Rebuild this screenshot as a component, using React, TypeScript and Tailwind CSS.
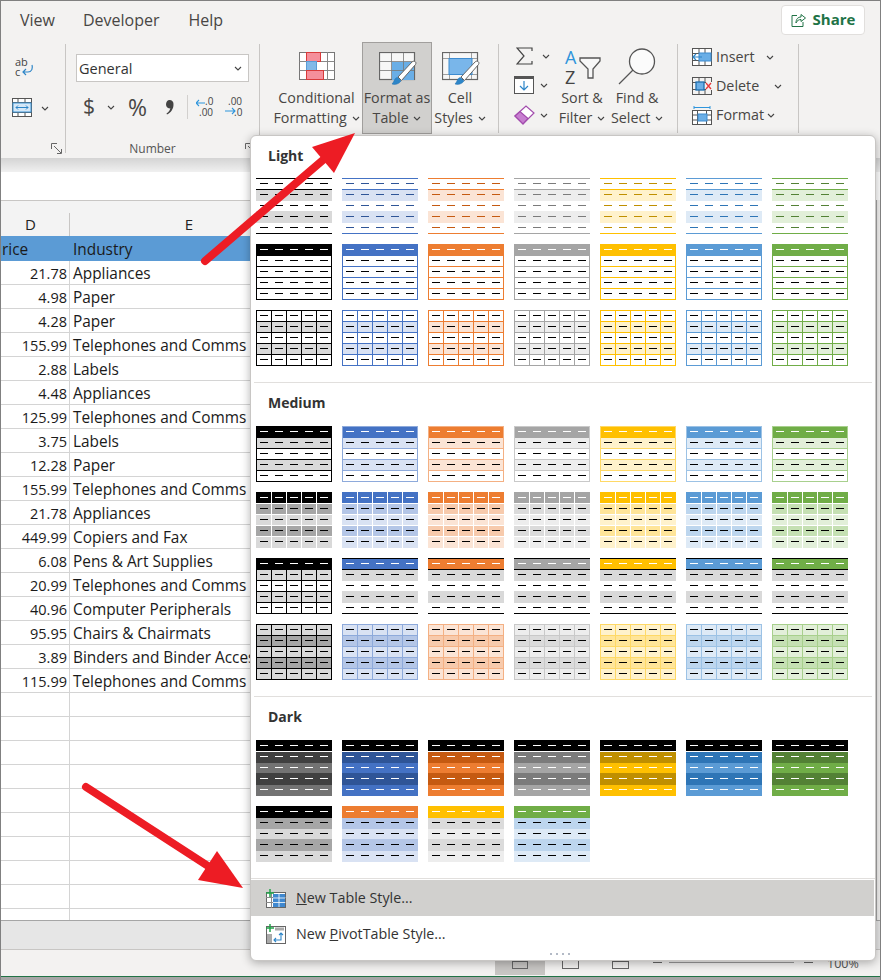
import React from "react";

type Accent = { c: string; light: string; mid: string; border: string; dark: string; alt: string };

const BLACK: Accent = { c: "#000000", light: "#d9d9d9", mid: "#a6a6a6", border: "#000000", dark: "#404040", alt: "#737373" };
const BLUE: Accent = { c: "#4472c4", light: "#d9e2f3", mid: "#b4c6e7", border: "#8eaadb", dark: "#2f5597", alt: "#4472c4" };
const ORANGE: Accent = { c: "#ed7d31", light: "#fbe4d5", mid: "#f7caac", border: "#f4b083", dark: "#c55a11", alt: "#ed7d31" };
const GRAY: Accent = { c: "#a5a5a5", light: "#ededed", mid: "#dbdbdb", border: "#c9c9c9", dark: "#7b7b7b", alt: "#a5a5a5" };
const YELLOW: Accent = { c: "#ffc000", light: "#fff2cc", mid: "#ffe599", border: "#ffd966", dark: "#bf8f00", alt: "#ffc000" };
const SKY: Accent = { c: "#5b9bd5", light: "#deeaf6", mid: "#bdd6ee", border: "#9cc2e5", dark: "#2e75b6", alt: "#5b9bd5" };
const GREEN: Accent = { c: "#70ad47", light: "#e2efd9", mid: "#c5e0b3", border: "#a8d08d", dark: "#538135", alt: "#70ad47" };
const ALL = [BLACK, BLUE, ORANGE, GRAY, YELLOW, SKY, GREEN];

const DASH_X = [4, 19, 34, 49, 64];
const DASH_Y = [5, 16, 27, 38, 49];
const H_LINES = [11, 22, 33, 44];
const V_LINES = [15, 30, 45, 60];

const Dashes = ({ colors }: { colors: string[] }) => (
  <>
    {DASH_Y.map((y, i) =>
      DASH_X.map((x) => <rect key={`${x}-${y}`} x={x} y={y} width={8} height={1} fill={colors[i]} />)
    )}
  </>
);

const Band = ({ y, h, fill }: { y: number; h: number; fill: string }) => <rect x={0} y={y} width={76} height={h} fill={fill} />;
const HLine = ({ y, fill }: { y: number; fill: string }) => <rect x={0} y={y} width={76} height={1} fill={fill} />;
const VLine = ({ x, fill }: { x: number; fill: string }) => <rect x={x} y={0} width={1} height={56} fill={fill} />;
const Frame = ({ fill }: { fill: string }) => (
  <>
    <HLine y={0} fill={fill} />
    <HLine y={55} fill={fill} />
    <VLine x={0} fill={fill} />
    <VLine x={75} fill={fill} />
  </>
);

const K = "#000000";
const W = "#ffffff";

const Thumb = ({ kind, a, alt }: { kind: string; a: Accent; alt?: Accent }) => {
  let body: React.ReactNode = null;
  if (kind === "l1") {
    body = (
      <>
        <Band y={11} h={12} fill={a.light} />
        <Band y={33} h={12} fill={a.light} />
        <HLine y={0} fill={a.c} />
        <HLine y={11} fill={a.c} />
        <HLine y={55} fill={a.c} />
        <Dashes colors={Array(5).fill(a === BLACK ? K : a.dark)} />
      </>
    );
  } else if (kind === "l2") {
    body = (
      <>
        <Band y={0} h={12} fill={a.c} />
        {H_LINES.slice(1).map((y) => <HLine key={y} y={y} fill={a.c} />)}
        <HLine y={22} fill={a.c} />
        <Frame fill={a.c} />
        <Dashes colors={[W, K, K, K, K]} />
      </>
    );
  } else if (kind === "l3") {
    body = (
      <>
        <Band y={11} h={11} fill={a.light} />
        <Band y={33} h={11} fill={a.light} />
        {H_LINES.map((y) => <HLine key={y} y={y} fill={a.c} />)}
        {V_LINES.map((x) => <VLine key={x} x={x} fill={a.c} />)}
        <Frame fill={a.c} />
        <Dashes colors={Array(5).fill(K)} />
      </>
    );
  } else if (kind === "m1") {
    body = (
      <>
        <Band y={12} h={10} fill={a.light} />
        <Band y={33} h={11} fill={a.light} />
        {H_LINES.slice(1).map((y) => <HLine key={y} y={y} fill={a.border} />)}
        <HLine y={22} fill={a.border} />
        <Frame fill={a.border} />
        <rect x={a === BLACK ? 0 : 1} y={a === BLACK ? 0 : 1} width={a === BLACK ? 76 : 74} height={a === BLACK ? 12 : 11} fill={a.c} />
        <Dashes colors={[W, K, K, K, K]} />
      </>
    );
  } else if (kind === "m2") {
    body = (
      <>
        <Band y={0} h={12} fill={a.c} />
        <Band y={12} h={10} fill={a.mid} />
        <Band y={22} h={11} fill={a.light} />
        <Band y={33} h={11} fill={a.mid} />
        <Band y={44} h={12} fill={a.light} />
        {H_LINES.map((y) => <HLine key={y} y={y} fill={W} />)}
        {V_LINES.map((x) => <VLine key={x} x={x} fill={W} />)}
        <Dashes colors={[W, K, K, K, K]} />
      </>
    );
  } else if (kind === "m3") {
    const grid = a === BLACK;
    body = grid ? (
      <>
        <Band y={12} h={10} fill={a.light} />
        <Band y={33} h={11} fill={a.light} />
        <Band y={0} h={12} fill={K} />
        {H_LINES.slice(1).map((y) => <HLine key={y} y={y} fill={K} />)}
        <HLine y={22} fill={K} />
        {V_LINES.map((x) => <rect key={x} x={x} y={12} width={1} height={44} fill={K} />)}
        <Frame fill={K} />
        <Dashes colors={[W, K, K, K, K]} />
      </>
    ) : (
      <>
        <Band y={0} h={12} fill={a.c} />
        <Band y={12} h={11} fill="#d9d9d9" />
        <Band y={33} h={12} fill="#d9d9d9" />
        <HLine y={0} fill={K} />
        <HLine y={11} fill={K} />
        <HLine y={55} fill={K} />
        <Dashes colors={[W, K, K, K, K]} />
      </>
    );
  } else if (kind === "m4") {
    const line = a === BLACK ? K : a.border;
    body = (
      <>
        <Band y={0} h={11} fill={a.light} />
        <Band y={11} h={11} fill={a.mid} />
        <Band y={22} h={11} fill={a.light} />
        <Band y={33} h={11} fill={a.mid} />
        <Band y={44} h={12} fill={a.light} />
        {H_LINES.map((y) => <HLine key={y} y={y} fill={line} />)}
        {V_LINES.map((x) => <VLine key={x} x={x} fill={line} />)}
        <Frame fill={line} />
        <Dashes colors={Array(5).fill(K)} />
      </>
    );
  } else if (kind === "d1") {
    body = (
      <>
        <Band y={0} h={11} fill={K} />
        <Band y={12} h={11} fill={a.dark} />
        <Band y={23} h={10} fill={a.alt} />
        <Band y={33} h={12} fill={a.dark} />
        <Band y={45} h={11} fill={a.alt} />
        <Dashes colors={Array(5).fill(W)} />
      </>
    );
  } else if (kind === "d2") {
    const b = alt || a;
    body = (
      <>
        <Band y={0} h={12} fill={a.c} />
        <Band y={12} h={11} fill={b.mid} />
        <Band y={23} h={10} fill={b.light} />
        <Band y={33} h={12} fill={b.mid} />
        <Band y={45} h={11} fill={b.light} />
        <Dashes colors={[W, K, K, K, K]} />
      </>
    );
  }
  return (
    <svg width={76} height={56} viewBox="0 0 76 56" shapeRendering="crispEdges" className="block">
      {body}
    </svg>
  );
};

const Chevron = ({ className = "" }: { className?: string }) => (
  <svg width={8} height={5} viewBox="0 0 8 5" className={`inline-block shrink-0 ${className}`}>
    <path d="M1 1l3 3 3-3" fill="none" stroke="#444" strokeWidth={1.1} />
  </svg>
);

const Launcher = () => (
  <svg width={11} height={11} viewBox="0 0 11 11" className="block">
    <path d="M.5 6V.5H6M3 3l7 7M10.5 6v4.500H6" fill="none" stroke="#666" strokeWidth={1} />
  </svg>
);

const ConditionalIcon = () => (
  <svg width={36} height={29} viewBox="0 0 36 29" className="mt-[1px]">
    <rect x=".5" y=".5" width="35" height="27" fill="#fff" stroke="#777" />
    <path d="M.5 9.500h35M.5 18.500h35M7.500 0v28M28.500 0v28" stroke="#888" />
    <rect x="7.500" y=".5" width="14" height="9" fill="#f58f9b" stroke="#d83b3b" />
    <rect x="7.500" y="9.500" width="10" height="9" fill="#83b9e8" stroke="#5b9bd5" />
    <rect x="7.500" y="18.500" width="17" height="9" fill="#f58f9b" stroke="#d83b3b" />
  </svg>
);

const BrushStroke = () => (
  <>
    <path d="M13 32c3 1 7 0 9-3l-3.500-3.500c-3 0-3 4-5.500 6.500z" fill="#2e86c8" stroke="#1f6fb0" strokeWidth=".5" />
    <path d="M19 25l14-15c2-2 5 0 3.500 2.500L22.500 28.500z" fill="#fff" stroke="#666" strokeWidth="1" />
  </>
);

const FormatTableIcon = () => (
  <svg width={38} height={34} viewBox="0 0 38 34" className="mt-[1px] ml-[2px]">
    <rect x=".5" y=".5" width="35" height="27" fill="#f7f7f7" stroke="#666" strokeWidth="1.200" />
    <rect x="13" y="10" width="22" height="18" fill="#6aaee6" />
    <path d="M1 9.500h34M1 18.500h34M12.500 1v26M24.500 1v26" stroke="#777" strokeWidth=".8" />
    <BrushStroke />
  </svg>
);

const CellStylesIcon = () => (
  <svg width={38} height={34} viewBox="0 0 38 34" className="mt-[1px] ml-[2px]">
    <rect x=".5" y=".5" width="35" height="27" fill="#f7f7f7" stroke="#666" strokeWidth="1.200" />
    <path d="M1 6.500h34M1 22.500h34M7.500 1v26M29.500 1v26" stroke="#888" strokeWidth=".8" />
    <rect x="7" y="6.500" width="23" height="16" fill="#79b6ea" stroke="#3c8bd0" />
    <BrushStroke />
  </svg>
);

const WrapIcon = () => (
  <svg width={20} height={22} viewBox="0 0 20 22">
    <text x="0" y="9" fontSize="11" fill="#444" fontFamily="Open Sans, sans-serif">ab</text>
    <text x="0" y="19" fontSize="11" fill="#444" fontFamily="Open Sans, sans-serif">c</text>
    <path d="M17 8c1 3 0 7-4 7H8m3-3l-3 3 3 3" fill="none" stroke="#2e86c8" strokeWidth="1.200" />
  </svg>
);

const MergeIcon = () => (
  <svg width={20} height={19} viewBox="0 0 20 19">
    <rect x=".5" y=".5" width="19" height="18" fill="#fff" stroke="#555" />
    <path d="M0 4.500h20M0 14.500h20M6 0v4M13 0v4M6 15v4M13 15v4" stroke="#555" />
    <rect x="1" y="5" width="18" height="9" fill="#d6e8f7" stroke="#3c96d8" />
    <path d="M4 9.500h12M6 7.500l-2 2 2 2M14 7.500l2 2-2 2" fill="none" stroke="#2e86c8" />
  </svg>
);

const CommaIcon = () => (
  <svg width={10} height={16} viewBox="0 0 10 16" className="block">
    <path d="M4.500 1a4 4 0 0 1 4 4.500C8.500 10 6 13.500 2 15.500L1.500 14.500C4 13 5 11 5.300 9.300 3 9.800 1 8 1 5.300 1 3 2.500 1 4.500 1z" fill="#444" />
  </svg>
);

const DecIcon = ({ more }: { more?: boolean }) => (
  <svg width={21} height={20} viewBox="0 0 21 20">
    <text x={more ? 3 : 9} y="8" fontSize="10" fill="#444" fontFamily="Open Sans, sans-serif">{more ? ".00" : ".0"}</text>
    <text x={more ? 9 : 3} y="19" fontSize="10" fill="#444" fontFamily="Open Sans, sans-serif">{more ? ".0" : ".00"}</text>
    {more ? (
      <path d="M0 13h10m-3-3l3 3-3 3" fill="none" stroke="#2e95dc" strokeWidth="1.100" transform="translate(0 1)" />
    ) : (
      <path d="M9 6H0m3-3L0 6l3 3" fill="none" stroke="#2e95dc" strokeWidth="1.100" />
    )}
  </svg>
);

const SigmaIcon = () => (
  <svg width={17} height={18} viewBox="0 0 17 18">
    <path d="M16 4V1H1l7 8-7 8h15v-3" fill="none" stroke="#444" strokeWidth="1.200" />
  </svg>
);

const FillIcon = () => (
  <svg width={20} height={18} viewBox="0 0 20 18">
    <rect x=".5" y=".5" width="19" height="17" fill="#fff" stroke="#555" />
    <rect x="0" y="0" width="20" height="3" fill="#555" />
    <path d="M10 5v9m-4-4l4 4 4-4" fill="none" stroke="#2e86c8" strokeWidth="1.200" />
  </svg>
);

const EraserIcon = () => (
  <svg width={21} height={20} viewBox="0 0 21 20">
    <path d="M1 11L12 1l8 7-11 11z" fill="#fff" stroke="#a24bad" strokeWidth="1.200" />
    <path d="M1 11l5-4.500 8 7L9 19z" fill="#c77fd0" stroke="#a24bad" strokeWidth="1.200" />
  </svg>
);

const SortIcon = () => (
  <svg width={37} height={37} viewBox="0 0 37 37" className="mt-[-3px]">
    <text x="1" y="16" fontSize="18" fill="#2e95dc" fontFamily="Open Sans, sans-serif">A</text>
    <text x="1" y="36" fontSize="18" fill="#444" fontFamily="Open Sans, sans-serif">Z</text>
    <path d="M16 10h20v3l-7 8v9h-5v-9l-8-8z" fill="#f7f7f7" stroke="#555" strokeWidth="1.300" />
  </svg>
);

const FindIcon = () => (
  <svg width={38} height={37} viewBox="0 0 38 37" className="mt-[-3px]">
    <circle cx="24" cy="13.500" r="12.500" fill="#fbfbfb" stroke="#555" strokeWidth="1.300" />
    <path d="M15 22L1 36" stroke="#555" strokeWidth="1.300" />
  </svg>
);

const InsertIcon = () => (
  <svg width={20} height={18} viewBox="0 0 20 18">
    <rect x=".5" y=".5" width="19" height="17" fill="#fff" stroke="#555" />
    <path d="M0 5.500h20M0 12.500h20M7 0v5M13 0v5M7 13v5M13 13v5" stroke="#555" />
    <rect x="7" y="5" width="12" height="8" fill="#6aaee6" stroke="#3c8bd0" />
    <path d="M10 9H1m3-3L1 9l3 3" fill="#fff" stroke="#2e86c8" strokeWidth="1.200" />
  </svg>
);

const DeleteIcon = () => (
  <svg width={20} height={18} viewBox="0 0 20 18">
    <path d="M.5.500h19M.5 17.500h19M.5 0v18M0 5.500h14M0 12.500h14M7 0v5M13 0v5M7 13v5M13 13v5M19.500 0v5M19.500 13v5" fill="none" stroke="#555" />
    <rect x="4" y="5" width="8" height="8" fill="#6aaee6" stroke="#1f6fb0" strokeWidth="1.300" />
    <path d="M14 6l5 6M19 6l-5 6" stroke="#e8383b" strokeWidth="1.300" />
  </svg>
);

const FormatIcon = () => (
  <svg width={20} height={20} viewBox="0 0 20 20">
    <path d="M2 1v3M18 1v3M2 2.500h16" stroke="#2e95dc" fill="none" />
    <rect x=".5" y="5.500" width="19" height="14" fill="#fff" stroke="#555" />
    <path d="M0 10h20M0 15h20M5.500 5v15M14.500 5v15" stroke="#555" />
    <rect x="6" y="9" width="9" height="7" fill="#6aaee6" stroke="#3c8bd0" />
  </svg>
);

const ShareIcon = () => (
  <svg width={15} height={15} viewBox="0 0 15 15">
    <path d="M6 3.500H1v11h11V10M5 11c0-4 2-6 5-6V2.500L14.500 6 10 9.500V7.500C8 7.500 6 8.500 5 11z" fill="none" stroke="#217346" strokeWidth="1" />
  </svg>
);

const NewTableIcon = () => (
  <svg width={21} height={19} viewBox="0 0 21 19">
    <rect x="1.500" y="3.500" width="19" height="15" fill="#fff" stroke="#666" />
    <path d="M1 8.500h20M1 13.500h20M6.500 3v16" stroke="#888" />
    <rect x="8" y="5" width="12" height="13" fill="#3f88cf" />
    <path d="M8 9h12M8 13.500h12M14 5v13" stroke="#fff" strokeWidth=".8" />
    <path d="M5 0v8M1 4h8" stroke="#22a34a" strokeWidth="1.500" />
  </svg>
);

const NewPivotIcon = () => (
  <svg width={21} height={20} viewBox="0 0 21 20">
    <rect x="1.500" y="2.500" width="19" height="17" fill="#fff" stroke="#666" />
    <rect x="2" y="10" width="5" height="9" fill="#aaa" />
    <rect x="10" y="3.500" width="9" height="3" fill="#aaa" />
    <path d="M9 16h7V9m-2 2l2-2 2 2M11 14l-2 2 2 2" fill="none" stroke="#2e86c8" strokeWidth="1.100" />
    <path d="M5 0v8M1 4h8" stroke="#22a34a" strokeWidth="1.500" />
  </svg>
);

const GroupDivider = ({ h = "h-[109px]" }: { h?: string }) => <div className={`w-px ${h} bg-[#c8c6c4] shrink-0`} />;

const SmallTool = ({ icon, w }: { icon: React.ReactNode; w: string }) => (
  <div className={`flex items-center ${w}`}>{icon}</div>
);

const LargeButton = ({ icon, l1, l2, w, active }: { icon: React.ReactNode; l1: string; l2: string; w: string; active?: boolean }) => (
  <div className={`flex flex-col items-center shrink-0 mt-[-2px] ${w} h-[92px] ${active ? "bg-[#d1d0ce] border border-[#a19f9d]" : "border border-transparent"}`}>
    <div className="h-[37px] mt-[8px] flex items-start justify-center">{icon}</div>
    <div className="leading-[20px] text-center whitespace-nowrap">{l1}</div>
    <div className="leading-[20px] text-center whitespace-nowrap">
      {l2} <Chevron className="ml-[1px] mb-[2px]" />
    </div>
  </div>
);

const Ribbon = () => (
  <div className="h-[157px] bg-[#f3f2f1] text-[#484644] text-[14.3px] shrink-0">
    <div className="h-[41px] pb-[4px] flex items-center pl-[19px] text-[16px]">
      <span className="mr-[28px]">View</span>
      <span className="mr-[29px]">Developer</span>
      <span>Help</span>
      <div className="ml-auto mr-[15px] w-[84px] h-[30px] bg-white border border-[#e1dfdd] rounded-[4px] flex items-center justify-center gap-[7px] text-[#217346] font-bold text-[15px]">
        <ShareIcon />
        Share
      </div>
    </div>
    <div className="flex h-[115px] pt-[2px]">
      <div className="w-[64px] pl-[11px] flex flex-col shrink-0">
        <div className="h-[43px] pl-[3px] pt-[13px]"><WrapIcon /></div>
        <div className="h-[32px] flex items-start gap-[9px] pt-[11px]"><MergeIcon /><Chevron className="mt-[8px]" /></div>
        <div className="flex justify-end pr-[3px] pt-[24px]"><Launcher /></div>
      </div>
      <GroupDivider />
      <div className="w-[193px] px-[10px] flex flex-col shrink-0">
        <div className="mt-[10px] h-[28px] bg-white border border-[#c8c6c4] flex items-center pl-[2px] pt-[1px] pr-[6px] justify-between text-[14.5px] text-[#333]">
          General <Chevron />
        </div>
        <div className="flex items-center h-[50px] pl-[3px]">
          <span className="text-[21px] w-[20px] text-center">$</span>
          <Chevron className="ml-[8px]" />
          <span className="text-[23px] ml-[13px] w-[26px]">%</span>
          <div className="ml-[11px]"><CommaIcon /></div>
          <div className="w-px h-[24px] bg-[#d2d0ce] ml-[12px] mr-[8px]" />
          <DecIcon />
          <div className="w-[8px]" />
          <DecIcon more />
        </div>
        <div className="relative text-center text-[12px] text-[#555] leading-none mt-[11px] pr-[20px]">
          Number
          <div className="absolute right-[-7px] top-0"><Launcher /></div>
        </div>
      </div>
      <GroupDivider />
      <div className="w-[238px] flex shrink-0 pl-[11px]">
        <LargeButton icon={<ConditionalIcon />} l1="Conditional" l2="Formatting" w="w-[91px]" />
        <LargeButton icon={<FormatTableIcon />} l1="Format as" l2="Table" w="w-[70px]" active />
        <LargeButton icon={<CellStylesIcon />} l1="Cell" l2="Styles" w="w-[56px]" />
      </div>
      <GroupDivider h="h-[89px]" />
      <div className="w-[178px] flex shrink-0 pl-[15px]">
        <div className="w-[40px] shrink-0 flex flex-col gap-[11px] pt-[3px]">
          <div className="flex items-center gap-[9px] pl-[2px]"><SmallTool icon={<SigmaIcon />} w="w-[17px] shrink-0" /><Chevron /></div>
          <div className="flex items-center gap-[6px]"><SmallTool icon={<FillIcon />} w="w-[20px] shrink-0" /><Chevron /></div>
          <div className="flex items-center gap-[5px]"><SmallTool icon={<EraserIcon />} w="w-[21px] shrink-0" /><Chevron /></div>
        </div>
        <LargeButton icon={<SortIcon />} l1="Sort &" l2="Filter" w="w-[56px]" />
        <LargeButton icon={<FindIcon />} l1="Find &" l2="Select" w="w-[54px]" />
      </div>
      <GroupDivider h="h-[89px]" />
      <div className="w-[120px] pl-[14px] flex flex-col gap-[9px] pt-[3px] shrink-0">
        <div className="flex items-center h-[20px]"><InsertIcon /><span className="ml-[4px] w-[50px]">Insert</span><Chevron /></div>
        <div className="flex items-center h-[20px]"><DeleteIcon /><span className="ml-[4px] w-[58px]">Delete</span><Chevron /></div>
        <div className="flex items-center h-[20px]"><FormatIcon /><span className="ml-[4px] w-[51px]">Format</span><Chevron /></div>
      </div>
      <GroupDivider h="h-[89px]" />
    </div>
  </div>
);

const ROWS: [string, string][] = [
  ["21.78", "Appliances"],
  ["4.98", "Paper"],
  ["4.28", "Paper"],
  ["155.99", "Telephones and Comms"],
  ["2.88", "Labels"],
  ["4.48", "Appliances"],
  ["125.99", "Telephones and Comms"],
  ["3.75", "Labels"],
  ["12.28", "Paper"],
  ["155.99", "Telephones and Comms"],
  ["21.78", "Appliances"],
  ["449.99", "Copiers and Fax"],
  ["6.08", "Pens & Art Supplies"],
  ["20.99", "Telephones and Comms"],
  ["40.96", "Computer Peripherals"],
  ["95.95", "Chairs & Chairmats"],
  ["3.89", "Binders and Binder Accessories"],
  ["115.99", "Telephones and Comms"],
  ["", ""],
  ["", ""],
  ["", ""],
  ["", ""],
  ["", ""],
  ["", ""],
  ["", ""],
  ["", ""],
  ["", ""],
  ["", ""],
];

const Sheet = () => (
  <div className="flex-1 flex min-h-0">
    <div className="flex-1 flex flex-col overflow-hidden">
      <div className="h-[36px] shrink-0 bg-[#f3f3f3] border-t border-[#c8c6c4] flex text-[15px] text-[#222]">
        <div className="w-[69px] flex justify-center pt-[11px] leading-[24px] relative pr-[10px]">
          D
          <div className="absolute right-0 bottom-0 w-px h-[23px] bg-[#c8c6c4]" />
        </div>
        <div className="w-[238px] flex justify-center pt-[11px] leading-[24px]">E</div>
      </div>
      <div className="h-[25px] shrink-0 bg-[#5b9bd5] flex text-[15.4px] text-[#1a1a1a] leading-[27px]">
        <div className="w-[69px] pl-[1px]">rice</div>
        <div className="pl-[3px]">Industry</div>
      </div>
      {ROWS.map(([price, name], i) => (
        <div key={i} className="h-[24px] shrink-0 flex bg-white border-b border-[#d4d4d4] text-[#1a1a1a] leading-[25px]">
          <div className="w-[69px] border-r border-[#d4d4d4] text-right pr-[2px] text-[14.5px]">{price}</div>
          <div className="pl-[3px] whitespace-nowrap text-[15.4px]">{name}</div>
        </div>
      ))}
    </div>
    <div className="w-[4px] bg-[#f3f2f1] border-l border-[#a6a6a6] shrink-0" />
  </div>
);

const MenuSection = ({ title, head = "h-[43px]", children }: { title: string; head?: string; children: React.ReactNode }) => (
  <div>
    <div className={`${head} flex items-center pl-[17px] pb-[4px] font-bold text-[14px] text-[#333]`}>{title}</div>
    <div className="grid grid-cols-[repeat(7,76px)] gap-[10px] pl-[5px]">{children}</div>
  </div>
);

const ThumbRow = ({ kind }: { kind: string }) => (
  <>
    {ALL.map((a, i) => <Thumb key={`${kind}${i}`} kind={kind} a={a} />)}
  </>
);

const StyleMenu = () => (
  <div className="absolute left-[249px] top-[134px] w-[626px] h-[826px] bg-white border border-[#c8c6c4] rounded-[6px] shadow-[0_2px_10px_rgba(0,0,0,0.3)] flex flex-col overflow-hidden">
    <MenuSection title="Light" head="h-[42px]">
      <ThumbRow kind="l1" />
      <ThumbRow kind="l2" />
      <ThumbRow kind="l3" />
    </MenuSection>
    <div className="mt-[16px] mx-[3px] h-px bg-[#e1dfdd] shrink-0" />
    <MenuSection title="Medium">
      <ThumbRow kind="m1" />
      <ThumbRow kind="m2" />
      <ThumbRow kind="m3" />
      <ThumbRow kind="m4" />
    </MenuSection>
    <div className="mt-[16px] mx-[3px] h-px bg-[#e1dfdd] shrink-0" />
    <MenuSection title="Dark">
      <ThumbRow kind="d1" />
      <Thumb kind="d2" a={BLACK} />
      <Thumb kind="d2" a={ORANGE} alt={BLUE} />
      <Thumb kind="d2" a={YELLOW} alt={GRAY} />
      <Thumb kind="d2" a={GREEN} alt={SKY} />
    </MenuSection>
    <div className="mt-[16px] h-px bg-[#e1dfdd] shrink-0" />
    <div className="mt-[1px] mr-px h-[36px] shrink-0 bg-[#d1d0ce] flex items-center pl-[14px] text-[14.3px] text-[#333]">
      <NewTableIcon />
      <span className="ml-[10px]"><u>N</u>ew Table Style...</span>
    </div>
    <div className="h-[36px] shrink-0 flex items-center pl-[14px] text-[14.3px] text-[#333]">
      <NewPivotIcon />
      <span className="ml-[10px]">New <u>P</u>ivotTable Style...</span>
    </div>
    <div className="flex justify-center gap-[4px] pt-[1px] pr-[6px]">
      {[0, 1, 2, 3].map((i) => <div key={i} className="w-[2px] h-[2px] bg-[#b3bac6]" />)}
    </div>
  </div>
);

const Arrows = () => (
  <svg width={881} height={980} viewBox="0 0 881 980" className="absolute left-[-1px] top-[-1px] pointer-events-none">
    <path d="M205 261L323 160" stroke="#ed1c24" strokeWidth="8" strokeLinecap="round" fill="none" />
    <path d="M355 133L312 147L334 173Z" fill="#ed1c24" />
    <path d="M86 787L208 866" stroke="#ed1c24" strokeWidth="8" strokeLinecap="round" fill="none" />
    <path d="M243 888L217 851L198 880Z" fill="#ed1c24" />
  </svg>
);

const StatusBar = () => (
  <div className="h-[27px] shrink-0 bg-[#f3f2f1] border-t border-[#c8c6c4] flex items-start text-[12.5px] text-[#555] overflow-hidden">
    <div className="ml-[494px] w-[50px] h-[25px] bg-[#c8c6c4] flex justify-center pt-[11px]">
      <div className="w-[16px] h-[8px] border border-[#666]" />
    </div>
    <div className="ml-[17px] mt-[9px] w-[17px] h-[10px] border border-[#666]" />
    <div className="ml-[33px] mt-[11px] w-[17px] h-[8px] border border-[#666]" />
    <div className="ml-[24px] mt-[12px] w-[9px] h-px bg-[#666]" />
    <div className="ml-[7px] mt-[12px] w-[125px] h-px bg-[#999]" />
    <div className="ml-[10px] mt-[12px] w-[9px] h-px bg-[#666]" />
    <div className="ml-[14px] pt-[6px] leading-[16px]">100%</div>
  </div>
);

export default function App() {
  return (
    <div
      className="relative w-[881px] h-[980px] overflow-hidden bg-white flex flex-col border-t border-l border-r border-[#808080]"
      style={{ fontFamily: '"Open Sans", "Noto Sans", sans-serif' }}
    >
      <Ribbon />
      <div className="h-[14px] shrink-0 bg-gradient-to-b from-[#d4d4d4] to-[#f0f0f0]" />
      <div className="h-[28px] shrink-0 bg-white" />
      <Sheet />
      <div className="h-[29px] shrink-0 bg-[#e6e6e6] border-t border-[#a6a6a6]" />
      <StatusBar />
      <div className="h-px shrink-0 bg-[#217346]" />
      <div className="h-[3px] shrink-0 bg-[#a6a6a6]" />
      <StyleMenu />
      <Arrows />
    </div>
  );
}
